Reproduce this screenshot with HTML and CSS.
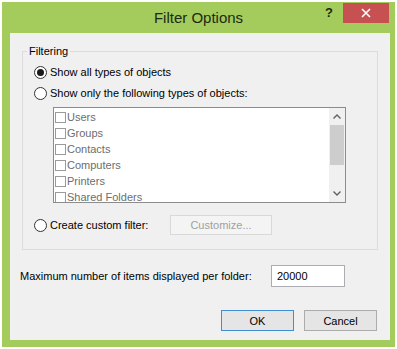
FILE: index.html
```html
<!DOCTYPE html>
<html>
<head>
<meta charset="utf-8">
<link rel="stylesheet" href="styles.css">
</head>
<body>
<div class="window">
  <div class="titlebar">
    <div class="title">Filter Options</div>
    <div class="help">?</div>
    <div class="close">
      <svg width="10" height="10" viewBox="0 0 10 10"><path d="M1 1L9 9M9 1L1 9" stroke="#fff" stroke-width="1.6" fill="none"/></svg>
    </div>
  </div>
  <div class="client">
    <fieldset class="group">
      <legend>Filtering</legend>
      <div class="radio-row first"><span class="radio checked"></span><span>Show all types of objects</span></div>
      <div class="radio-row second"><span class="radio"></span><span>Show only the following types of objects:</span></div>
      <div class="listbox">
        <div class="items">
          <div class="item"><span class="check"></span>Users</div>
          <div class="item"><span class="check"></span>Groups</div>
          <div class="item"><span class="check"></span>Contacts</div>
          <div class="item"><span class="check"></span>Computers</div>
          <div class="item"><span class="check"></span>Printers</div>
          <div class="item"><span class="check"></span>Shared Folders</div>
        </div>
        <div class="scrollbar">
          <div class="arrow"><svg width="8" height="5" viewBox="0 0 8 5"><path d="M0.5 4.5L4 1L7.5 4.5" stroke="#606060" stroke-width="1.4" fill="none"/></svg></div>
          <div class="thumb"></div>
          <div class="track"></div>
          <div class="arrow"><svg width="8" height="5" viewBox="0 0 8 5"><path d="M0.5 0.5L4 4L7.5 0.5" stroke="#606060" stroke-width="1.4" fill="none"/></svg></div>
        </div>
      </div>
      <div class="radio-row third">
        <span class="radio"></span><span class="custom-label">Create custom filter:</span>
        <div class="btn-disabled">Customize...</div>
      </div>
    </fieldset>
    <div class="max-row">
      <span class="max-label">Maximum number of items displayed per folder:</span>
      <div class="textbox">20000</div>
    </div>
    <div class="buttons">
      <div class="btn default">OK</div>
      <div class="btn">Cancel</div>
    </div>
  </div>
</div>
</body>
</html>
```
FILE: styles.css
```css
html, body {
  margin: 0;
  background: #fff;
}
body {
  font-family: "Liberation Sans", Arial, sans-serif;
  font-size: 11px;
  color: #000;
}
.window {
  margin: 2px 0 0 2px;
  width: 393px;
  height: 345px;
  background: #a3cc5c;
  display: flex;
  flex-direction: column;
}
.titlebar {
  height: 31px;
  display: grid;
  grid-template-columns: 1fr auto auto;
  align-items: start;
}
.title {
  grid-area: 1 / 1 / 2 / 4;
  text-align: center;
  font-size: 15px;
  line-height: 31px;
  color: #1d2a10;
}
.help {
  grid-area: 1 / 2 / 2 / 3;
  font-weight: bold;
  font-size: 13px;
  line-height: 16px;
  margin-top: 3px;
  margin-right: 10px;
  color: #1d2a10;
}
.close {
  grid-area: 1 / 3 / 2 / 4;
  width: 46px;
  height: 20px;
  margin-top: 1px;
  margin-right: 6px;
  background: #c75050;
  display: flex;
  align-items: center;
  justify-content: center;
}
.client {
  flex: 1;
  margin: 0 5px 7px 8px;
  background: #f0f0f0;
  padding: 10px 0 0 10px;
}
.group {
  margin: 0 0 0 2px;
  padding: 0 0 14px 0;
  border: 1px solid #dcdcdc;
  width: 356px;
  box-sizing: border-box;
  min-width: 0;
}
.group legend {
  margin-left: 4px;
  padding: 0 2px;
  line-height: 16px;
}
.radio-row {
  display: flex;
  align-items: center;
  height: 20px;
  margin-left: 11px;
}
.radio-row.first { margin-top: 3px; }
.radio-row.second { margin-top: 1px; }
.radio-row.third { margin-top: 12px; }
.radio {
  width: 13px;
  height: 13px;
  box-sizing: border-box;
  border: 1px solid #333;
  border-radius: 50%;
  background: #fff;
  margin-right: 3px;
  display: flex;
  align-items: center;
  justify-content: center;
}
.radio.checked::after {
  content: "";
  width: 7px;
  height: 7px;
  border-radius: 50%;
  background: #1a1a1a;
}
.custom-label {
  width: 120px;
}
.btn-disabled {
  width: 102px;
  height: 20px;
  box-sizing: border-box;
  border: 1px solid #d9d9d9;
  background: #f4f4f4;
  color: #a0a0a0;
  display: flex;
  align-items: center;
  justify-content: center;
}
.listbox {
  margin: 4px 0 0 30px;
  width: 293px;
  height: 96px;
  box-sizing: border-box;
  border: 1px solid #8c8c8c;
  background: #fff;
  display: flex;
}
.items {
  flex: 1;
  overflow: hidden;
  padding-top: 1px;
}
.item {
  height: 16px;
  display: flex;
  align-items: center;
  color: #6d6d6d;
  padding-left: 1px;
}
.check {
  width: 11px;
  height: 11px;
  box-sizing: border-box;
  border: 1px solid #9a9a9a;
  background: #fff;
  margin-right: 1px;
}
.scrollbar {
  width: 16px;
  background: #f0f0f0;
  display: flex;
  flex-direction: column;
}
.arrow {
  height: 17px;
  display: flex;
  align-items: center;
  justify-content: center;
}
.thumb {
  height: 40px;
  margin: 0 1px;
  background: #cdcdcd;
}
.track {
  flex: 1;
}
.max-row {
  display: flex;
  align-items: center;
  margin-top: 15px;
}
.max-label {
  width: 251px;
}
.textbox {
  width: 74px;
  height: 22px;
  box-sizing: border-box;
  border: 1px solid #abadb3;
  background: #fff;
  padding-left: 5px;
  display: flex;
  align-items: center;
}
.buttons {
  display: flex;
  justify-content: flex-end;
  gap: 10px;
  margin-top: 23px;
  margin-right: 13px;
}
.btn {
  width: 73px;
  height: 21px;
  box-sizing: border-box;
  border: 1px solid #acacac;
  background: #e5e5e5;
  display: flex;
  align-items: center;
  justify-content: center;
}
.btn.default {
  border-color: #3f8fd2;
}
```
